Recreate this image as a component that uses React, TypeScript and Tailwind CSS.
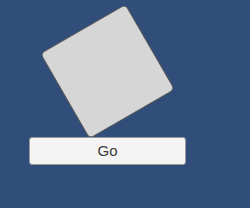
export default function App() {
  return (
    <div className="min-h-screen w-[250px] bg-[#304e79] pl-[29px] pt-[22px] font-['Liberation_Sans',Arial,sans-serif]">
      <div className="flex w-[157px] flex-col items-center">
        <div className="h-[99px] w-[99px] rotate-[-30deg] rounded-[5px] border border-[#555] bg-[#d6d6d6]" />
        <button
          type="button"
          className="mt-[16px] h-[28px] w-[157px] rounded-[3px] border border-[#9a9a9a] bg-[#f4f4f4] text-[15px] text-[#3a3a3a]"
        >
          Go
        </button>
      </div>
    </div>
  );
}
